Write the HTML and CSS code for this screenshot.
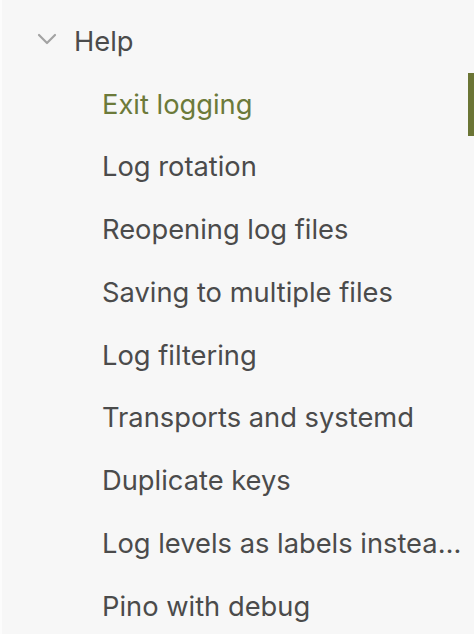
FILE: index.html
```html
<!DOCTYPE html>
<html>
<head>
<meta charset="utf-8">
<link rel="stylesheet" href="styles.css">
</head>
<body>
<nav class="sidebar">
  <div class="group">
    <div class="group-head">
      <svg class="chev" width="20" height="12" viewBox="0 0 20 12"><path d="M2 2 L10 10 L18 2" fill="none" stroke="#a3a3a3" stroke-width="2.2" stroke-linecap="round" stroke-linejoin="round"/></svg>
      <span class="group-title">Help</span>
    </div>
    <ul class="items">
      <li class="item active"><span class="label">Exit logging</span></li>
      <li class="item"><span class="label">Log rotation</span></li>
      <li class="item"><span class="label">Reopening log files</span></li>
      <li class="item"><span class="label">Saving to multiple files</span></li>
      <li class="item"><span class="label">Log filtering</span></li>
      <li class="item"><span class="label">Transports and systemd</span></li>
      <li class="item"><span class="label">Duplicate keys</span></li>
      <li class="item"><span class="label">Log levels as labels instead of numbers</span></li>
      <li class="item"><span class="label">Pino with debug</span></li>
    </ul>
  </div>
</nav>
</body>
</html>
```

FILE: styles.css
```css
html, body {
  margin: 0;
  padding: 0;
  background: #f7f7f7;
}
body {
  font-family: Inter, "Noto Sans", "Liberation Sans", sans-serif;
  color: #4b4b4b;
  overflow: hidden;
  height: 634px;
}
.sidebar {
  border-left: 2px solid #fcfcfc;
  padding-top: 10px;
}
.group-head {
  display: flex;
  align-items: center;
  height: 62.75px;
  padding-left: 35px;
}
.chev {
  margin-right: 17px;
  margin-top: -4px;
}
.group-title {
  font-size: 27.3px;
}
.items {
  list-style: none;
  margin: 0;
  padding: 0;
}
.item {
  display: flex;
  align-items: center;
  height: 62.75px;
  padding-left: 100px;
  padding-right: 6px;
  box-sizing: border-box;
  position: relative;
}
.label {
  font-size: 27.3px;
  white-space: nowrap;
  overflow: hidden;
  text-overflow: ellipsis;
  min-width: 0;
}
.item.active .label {
  color: #6c7a3a;
}
.item.active::after {
  content: "";
  position: absolute;
  right: 0;
  top: 0;
  bottom: 0;
  width: 6px;
  background: #6b7535;
}
```
